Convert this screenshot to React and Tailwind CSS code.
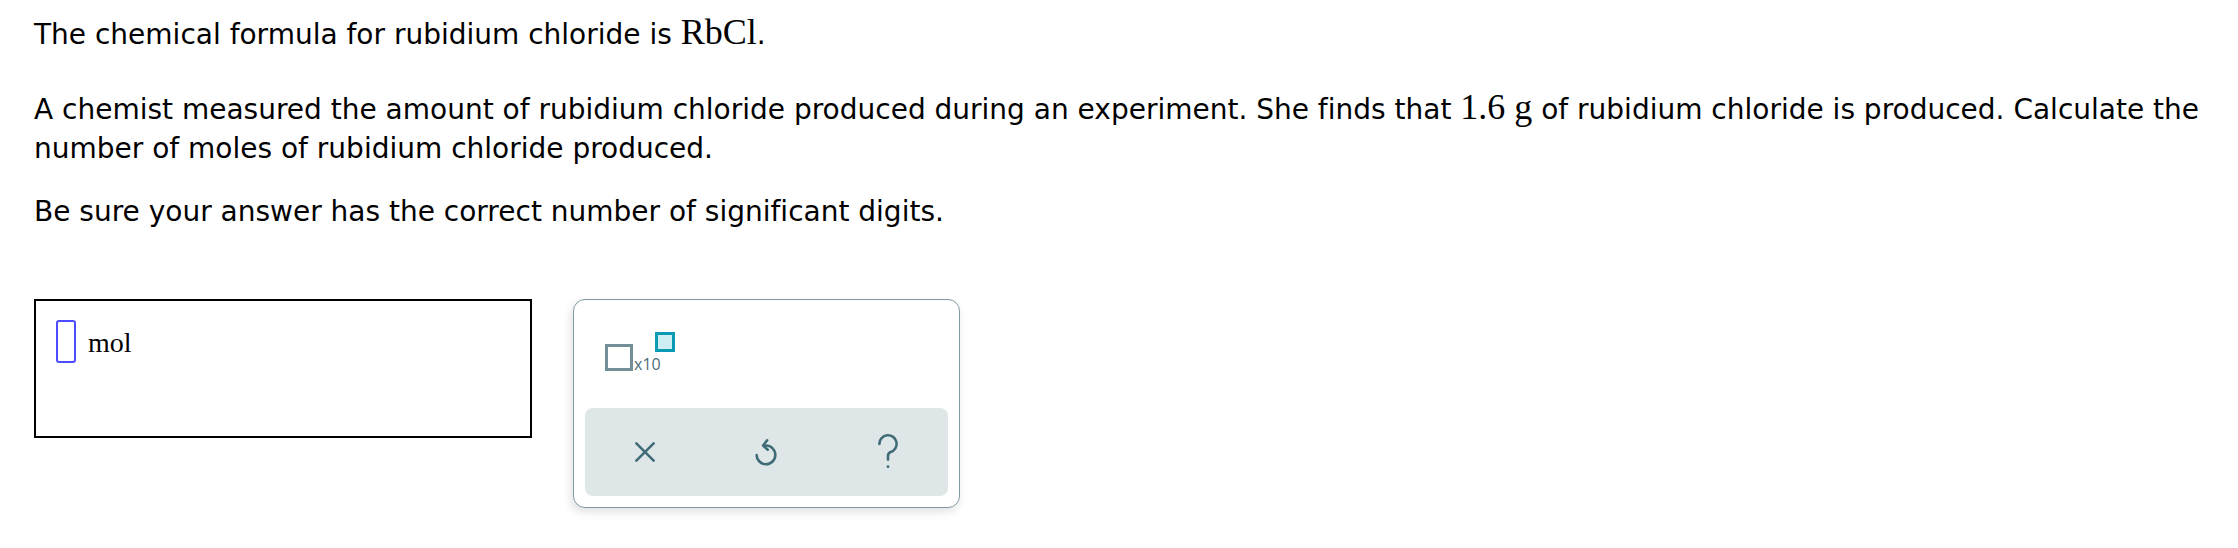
export default function App() {
  return (
    <div className="min-h-screen bg-white pl-[34px] pr-[20px] pt-[14px] font-['DejaVu_Sans',Verdana,sans-serif] text-[28px] leading-[39px] text-black [font-variant-ligatures:none]">
      <p>
        The chemical formula for rubidium chloride is{" "}
        <span className="font-['Liberation_Serif',serif] text-[36px] leading-none">RbCl</span>.
      </p>

      <p className="mt-[35px]">
        A chemist measured the amount of rubidium chloride produced during an experiment. She finds that{" "}
        <span className="font-['Liberation_Serif',serif] text-[36px] leading-none">
          1.6 g
        </span>{" "}
        of rubidium chloride is produced. Calculate the number of moles of rubidium chloride produced.
      </p>

      <p className="mt-[24px]">Be sure your answer has the correct number of significant digits.</p>

      <div className="mt-[68px] flex items-start gap-[41px]">
        {/* answer box */}
        <div className="flex h-[139px] w-[498px] items-start border-2 border-black pl-[20px] pt-[19px]">
          <div className="h-[43px] w-[20px] rounded-[3px] border-2 border-[#4d4dff]" />
          <span className="ml-[12px] mt-[6px] font-['Liberation_Serif',serif] text-[28px] leading-[34px]">mol</span>
        </div>

        {/* keypad */}
        <div className="flex h-[209px] w-[387px] flex-col rounded-[12px] border-[1.5px] border-[#7f9aa1] bg-white px-[11px] pb-[11px] shadow-[-2px_4px_10px_rgba(0,0,0,0.12)]">
          <div className="flex flex-1 items-start pl-[20px] pt-[32px]">
            <div className="flex items-end">
              <div className="mt-[12px] h-[27px] w-[28px] border-[3px] border-[#728e96]" />
              <span className="mb-[-2px] ml-[1px] font-['Open_Sans',sans-serif] text-[16px] leading-[18px] text-[#4b6e78]">x10</span>
              <div className="mb-[16px] ml-[-6px] h-[20px] w-[20px] self-start border-[3px] border-[#0b9ab4] bg-[#cdeef3]" />
            </div>
          </div>
          <div className="flex h-[88px] items-center justify-around rounded-[8px] bg-[#dfe6e8] text-[#3f6b77]">
            <svg width="26" height="26" viewBox="0 0 24 24" fill="none" stroke="currentColor" strokeWidth="2.4" strokeLinecap="round">
              <path d="M4 4l16 16M20 4L4 20" />
            </svg>
            <svg width="28" height="34" viewBox="0 0 24 29" fill="none" stroke="currentColor" strokeWidth="2.2" strokeLinecap="round" strokeLinejoin="round">
              <path d="M4 17a8 8 0 1 0 8-8h-1.5" />
              <path d="M13 4.5L9.5 9l4 3.5" />
            </svg>
            <svg width="26" height="38" viewBox="0 0 24 35" fill="none" stroke="currentColor" strokeWidth="2.4" strokeLinecap="round">
              <path d="M4 10a8 8 0 1 1 10.5 7.6c-1.7.6-2.5 1.8-2.5 3.6v3.3" />
              <circle cx="12" cy="31" r="1.3" fill="currentColor" stroke="none" />
            </svg>
          </div>
        </div>
      </div>
    </div>
  );
}
